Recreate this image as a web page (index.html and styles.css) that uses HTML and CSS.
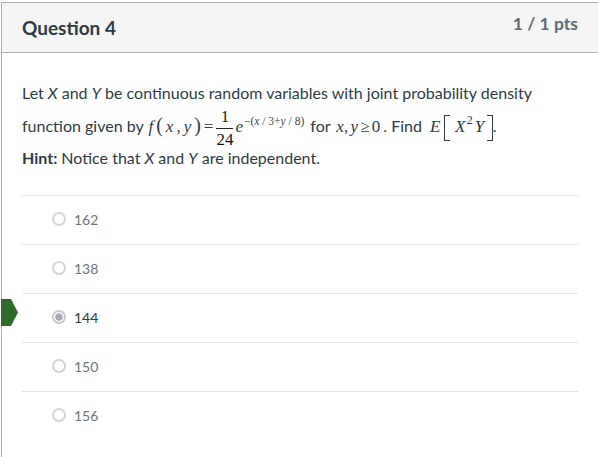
FILE: index.html
```html
<!DOCTYPE html>
<html lang="en">
<head>
<meta charset="utf-8">
<title>Question 4</title>
<link rel="stylesheet" href="styles.css">
</head>
<body>
<section class="card">
  <header class="head">
    <h2 class="title">Question 4</h2>
    <div class="pts">1 / 1 pts</div>
  </header>
  <div class="body">
    <div class="prompt">
      <p class="line">Let <i>X</i> and <i>Y</i> be continuous random variables with joint probability density</p>
      <p class="line mathline">function given by <span class="math fx"><i>f</i><span class="paren">(</span><i>x</i>,<i>y</i><span class="paren">)</span>=</span><span class="frac"><span class="num">1</span><span class="den">24</span></span><span class="math exp"><i>e</i><sup class="sup">&minus;(<i>x</i> / 3+<i>y</i> / 8)</sup></span> for <span class="math xy"><i>x</i>, <i>y</i> &ge; 0</span>. Find <span class="math ex"><i>E</i><span class="bracket left"></span><i>X</i><sup class="sup2">2</sup><i>Y</i><span class="bracket right"></span></span>.</p>
      <p class="line"><b>Hint:</b> Notice that <i>X</i> and <i>Y</i> are independent.</p>
    </div>
    <ul class="answers">
      <li class="answer"><span class="radio"></span><span class="label">162</span></li>
      <li class="answer"><span class="radio"></span><span class="label">138</span></li>
      <li class="answer chosen"><span class="radio on"></span><span class="label">144</span></li>
      <li class="answer"><span class="radio"></span><span class="label">150</span></li>
      <li class="answer"><span class="radio"></span><span class="label">156</span></li>
    </ul>
  </div>
  <svg class="marker" width="17" height="27" viewBox="0 0 17 27"><path d="M0 0H10L17 13.5L10 27H0Z" fill="#2e6b2a"/></svg>
</section>
</body>
</html>
```
FILE: styles.css
```css
* { box-sizing: border-box; }
html, body { margin: 0; padding: 0; background: #fff; }
body {
  height: 457px;
  overflow: hidden;
  padding: 2px 0 0 1px;
  font-family: Lato, "Open Sans", sans-serif;
  color: #2d3b45;
}
.card {
  position: relative;
  height: 455px;
  border-top: 1px solid #adadad;
  border-left: 1px solid #adadad;
}
.head {
  display: flex;
  justify-content: space-between;
  height: 50px;
  padding: 0 20px;
  background: #f5f5f5;
  border-bottom: 1px solid #adadad;
}
.title {
  margin: 13px 0 0;
  font-size: 19px;
  line-height: 24px;
  font-weight: 700;
}
.pts {
  margin-top: 10px;
  font-size: 17.5px;
  line-height: 22px;
  font-weight: 700;
  color: #5f6b73;
}
.body { padding: 24px 20px 0; }
.prompt { height: 118px; }
.line {
  margin: 0;
  height: 32.5px;
  font-size: 16px;
  line-height: 32.5px;
  white-space: nowrap;
}
.math {
  font-family: "Liberation Serif", "Times New Roman", serif;
  font-size: 17px;
  line-height: 0;
}
.fx { margin-left: 1px; letter-spacing: 3px; }
.paren { font-size: 20px; font-weight: 400; line-height: 0; }
.frac {
  display: inline-flex;
  flex-direction: column;
  align-items: center;
  vertical-align: 10px;
  width: 17px;
  margin: -30px 2px -30px 0;
  font-family: "Liberation Serif", "Times New Roman", serif;
  font-size: 16px;
  line-height: 16px;
  color: #111;
}
.num { border-bottom: 1px solid #222; width: 100%; text-align: center; padding-bottom: 3px; }
.den { font-size: 17px; padding-top: 3px; }
.sup {
  font-size: 11.5px;
  vertical-align: 7px;
  line-height: 0;
  margin-left: 1px;
  margin-right: 2px;
  color: #3c4750;
}
.xy { margin-left: 2px; margin-right: 3px; word-spacing: -2px; }
.ex { margin-left: 4px; }
.ex i { letter-spacing: 1.5px; }
.bracket {
  display: inline-block;
  width: 6px;
  height: 26px;
  margin: -17px 5px -9px 2px;
  border-top: 1px solid #2d3b45;
  border-bottom: 1px solid #2d3b45;
}
.left { border-left: 1px solid #2d3b45; }
.right { border-right: 1px solid #2d3b45; margin: -17px 0 -9px 1px; }
.sup2 { font-size: 12px; vertical-align: 8px; line-height: 0; margin: 0 2px 0 0; }
.answers {
  margin: 0;
  padding: 0;
  list-style: none;
}
.answer {
  display: flex;
  align-items: center;
  height: 49px;
  padding: 0 0 2px 30px;
  border-top: 1px solid #e3e3e3;
}
.radio {
  flex: none;
  width: 14px;
  height: 14px;
  border: 2px solid #d3d5d9;
  border-radius: 50%;
  background: #fff;
  margin-right: 8px;
}
.radio.on {
  border-color: #c9c9d1;
  background: radial-gradient(circle, #a9a9b5 0 3.4px, #fff 4px);
}
.label {
  font-size: 14px;
  color: #6b757c;
}
.chosen .label { color: #2d3b45; }
.marker {
  position: absolute;
  left: -1px;
  top: 296px;
}
```
